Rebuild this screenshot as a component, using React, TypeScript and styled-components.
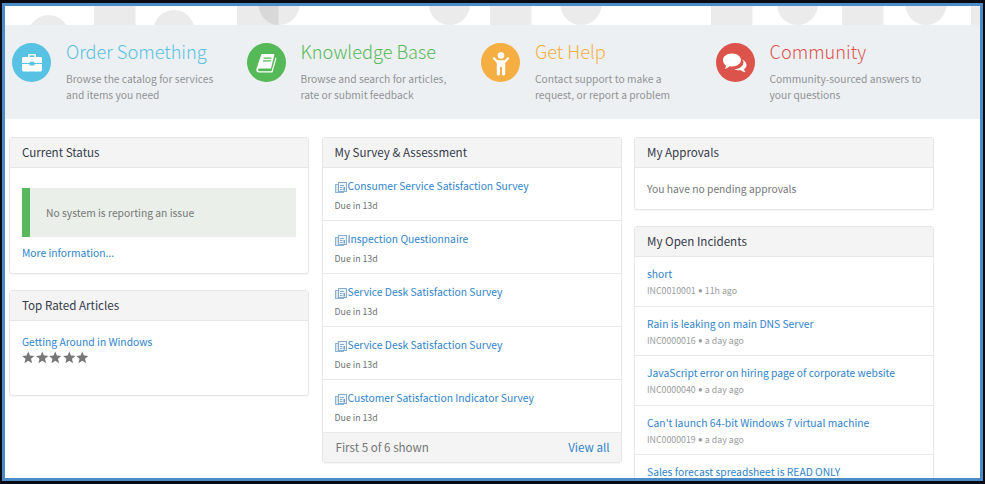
import React from "react";
import styled, { createGlobalStyle } from "styled-components";

const Global = createGlobalStyle`
  html, body { margin: 0; padding: 0; background: #000; }
  * { box-sizing: border-box; }
`;

const font = `"Noto Sans CJK SC", "Lato", "Liberation Sans", sans-serif`;

const Frame = styled.div`
  width: 985px;
  height: 484px;
  background: #0a0a12;
  padding: 3px 2px 3px 2px;
`;
const Page = styled.div`
  width: 981px;
  height: 478px;
  background: #fff;
  border: 3px solid #4a8bc8;
  overflow: hidden;
  font-family: ${font};
`;
const Pattern = styled.svg`
  display: block;
  width: 975px;
  height: 19px;
`;
const Hero = styled.div`
  height: 94px;
  background: #edf0f2;
  display: grid;
  grid-template-columns: repeat(4, 234.5px);
  padding-left: 7px;
  align-items: start;
`;
const HeroItem = styled.div`
  display: flex;
  gap: 15px;
  padding-top: 18px;
`;
const Circle = styled.div<{ $c: string }>`
  width: 39px;
  height: 39px;
  border-radius: 50%;
  background: ${p => p.$c};
  display: flex;
  align-items: center;
  justify-content: center;
  flex: none;
`;
const HeroText = styled.div`
  margin-top: -6px;
`;
const HeroTitle = styled.div<{ $c: string }>`
  color: ${p => p.$c};
  font-family: "Noto Sans CJK SC Light", "Noto Sans CJK SC", sans-serif;
  font-size: 18.2px;
  font-weight: 300;
  line-height: 28px;
  margin-bottom: 6px;
  white-space: nowrap;
`;
const HeroDesc = styled.div`
  color: #909396;
  font-size: 10.25px;
  line-height: 16px;
  white-space: nowrap;
`;
const Columns = styled.div`
  display: grid;
  grid-template-columns: repeat(3, 300px);
  column-gap: 12.5px;
  padding: 18px 0 0 4px;
  align-items: start;
`;
const Column = styled.div`
  display: flex;
  flex-direction: column;
  gap: 16px;
`;
const Card = styled.div`
  background: #fff;
  border: 1px solid #e4e8ea;
  border-radius: 3px;
  box-shadow: 0 1px 1px rgba(0, 0, 0, 0.04);
  overflow: hidden;
`;
const CardHead = styled.div`
  height: 30px;
  background: #f4f4f4;
  border-bottom: 1px solid #e4e6e7;
  padding: 0 0 2px 12px;
  display: flex;
  align-items: center;
  font-size: 11.6px;
  color: #343a4a;
`;
const StatusBody = styled.div`
  padding: 20px 12px 13px;
  height: 105px;
`;
const StatusBox = styled.div`
  height: 49px;
  background: #ebefe9;
  border-left: 8px solid #58b95c;
  padding: 0 0 1px 16px;
  display: flex;
  align-items: center;
  font-size: 10.3px;
  color: #747878;
`;
const Link = styled.a`
  color: #2f84cc;
  font-size: 10.3px;
  line-height: 16px;
  display: block;
  white-space: nowrap;
`;
const MoreLink = styled(Link)`
  margin-top: 8px;
`;
const ArticlesBody = styled.div`
  height: 74px;
  padding: 13px 12px;
`;
const Stars = styled.div`
  display: flex;
  gap: 1px;
  margin-top: 1px;
`;
const Row = styled.div`
  height: 53px;
  border-bottom: 1px solid #e7e9ea;
  padding: 9px 12px 0;
`;
const RowTitle = styled.div`
  display: flex;
  align-items: center;
  gap: 1px;
  height: 17px;
`;
const Meta = styled.div`
  font-size: 8.8px;
  color: #6f7375;
  margin-top: 5px;
  line-height: 13px;
`;
const CardFoot = styled.div`
  height: 29px;
  background: #f4f4f4;
  padding: 0 11px 1px 13px;
  display: flex;
  align-items: center;
  justify-content: space-between;
  font-size: 11.6px;
  color: #747678;
`;
const FootLink = styled.span`
  color: #2f84cc;
`;
const Plain = styled.div`
  height: 41px;
  padding-left: 12px;
  display: flex;
  align-items: center;
  font-size: 10.3px;
  color: #747878;
`;
const IncidentRow = styled.div`
  height: 49.5px;
  border-bottom: 1px solid #e7e9ea;
  padding: 9px 12px 0;
`;
const IncMeta = styled(Meta)`
  color: #989b9d;
  margin-top: 1px;
  line-height: 16px;
`;
const Dot = styled.span`
  font-family: "Lato", sans-serif;
`;
const SurveySvg = styled.svg`
  flex: none;
  margin-top: 3px;
`;

const Briefcase = () => (
  <svg width="24" height="22" viewBox="0 0 24 22">
    <path fill="#fff" d="M8 5V3.2C8 2.5 8.5 2 9.2 2h5.600C15.500 2 16 2.500 16 3.200V5h-1.500V3.500h-5V5z" />
    <path fill="#fff" d="M3.500 5h17C21.400 5 22 5.600 22 6.500V11h-7.500V9.800h-5V11H2V6.500C2 5.600 2.600 5 3.500 5z" />
    <path fill="#fff" d="M2 12h7.500v1.500h5V12H22v6c0 .9-.6 1.500-1.500 1.500h-17C2.600 19.500 2 18.900 2 18z" />
  </svg>
);
const Book = () => (
  <svg width="24" height="24" viewBox="0 0 24 24">
    <path fill="#fff" d="M7.500 3H20.500L17 17.500H5.500C4.500 17.500 4 18.200 4 19s.6 1.300 1.500 1.300H17.500L21.500 6.500 22.500 7 18.500 21.500H5C3 21.500 2 20 2.400 18z" />
    <path fill="#4fb856" d="M9.800 6.500H17.500L17.200 7.800H9.500zM9.200 9.300H16.900L16.600 10.600H8.900z" />
  </svg>
);
const Child = () => (
  <svg width="24" height="26" viewBox="0 0 24 26">
    <circle cx="12" cy="5.500" r="3.300" fill="#fff" />
    <path fill="#fff" d="M3.500 8.200 5 7l3.500 3.200H15.500L19 7l1.500 1.200-4.300 4.800V24a1.500 1.500 0 0 1-3.200 0v-7h-2v7a1.500 1.500 0 0 1-3.200 0V13z" />
  </svg>
);
const Comments = () => (
  <svg width="26" height="24" viewBox="0 0 26 24">
    <path fill="#fff" d="M19.500 8.500c2.800.8 5 2.800 5 5.500 0 1.900-1.100 3.300-2.500 4.300.2 1.100.8 2.100 1.500 3-1.900-.2-3.400-1.100-4.600-2.100-2.500.4-5-.2-6.900-1.300 5 .3 9.500-2.500 9.500-7 0-.8-.7-1.700-2-2.400z" />
    <path fill="#fff" d="M10 2.500c5 0 9 2.900 9 6.500s-4 6.500-9 6.500c-.9 0-1.700-.1-2.500-.2C6.200 16.600 4.500 17.500 2.500 18c.8-1 1.500-2.100 1.700-3.300C2.300 13.500 1 11.400 1 9c0-3.600 4-6.500 9-6.500z" />
  </svg>
);
const SurveyIcon = () => (
  <SurveySvg width="12" height="12" viewBox="0 0 12 12">
    <rect x="0.500" y="3.500" width="8" height="8" fill="#d7e5f1" stroke="#8fb3d3" />
    <rect x="3.500" y="1.500" width="8" height="9" fill="#eef4f9" stroke="#86add0" />
    <path d="M5 4.500h4M5 6.500h2.500M5 8.500h2.500" stroke="#86add0" />
    <rect x="8.500" y="6" width="1.500" height="3.500" fill="#6f9fc8" />
  </SurveySvg>
);
const Star = () => (
  <svg width="12.500" height="12.500" viewBox="0 0 24 24">
    <path fill="#777" d="M12 .8l3.200 7.900 8.600.7-6.500 5.600 2 8.400L12 18.900l-7.300 4.500 2-8.400L.2 9.400l8.600-.7z" />
  </svg>
);

const heroItems = [
  { c: "#57c2e3", t: "Order Something", d: ["Browse the catalog for services", "and items you need"], i: <Briefcase /> },
  { c: "#55b958", t: "Knowledge Base", d: ["Browse and search for articles,", "rate or submit feedback"], i: <Book /> },
  { c: "#f4ae42", t: "Get Help", d: ["Contact support to make a", "request, or report a problem"], i: <Child /> },
  { c: "#dc534c", t: "Community", d: ["Community-sourced answers to", "your questions"], i: <Comments /> },
];
const surveys = [
  "Consumer Service Satisfaction Survey",
  "Inspection Questionnaire",
  "Service Desk Satisfaction Survey",
  "Service Desk Satisfaction Survey",
  "Customer Satisfaction Indicator Survey",
];
const incidents = [
  { t: "short", n: "INC0010001", a: "11h ago" },
  { t: "Rain is leaking on main DNS Server", n: "INC0000016", a: "a day ago" },
  { t: "JavaScript error on hiring page of corporate website", n: "INC0000040", a: "a day ago" },
  { t: "Can't launch 64-bit Windows 7 virtual machine", n: "INC0000019", a: "a day ago" },
  { t: "Sales forecast spreadsheet is READ ONLY" },
];
const rects = [89, 232, 485, 706, 837, 966];
const circles: [number, number][] = [[43.500, 29.500], [169, 24.500], [274, -1.500], [444.500, -1.500], [576, -1.500], [792.500, -1.500], [921, -1.500]];

export default function App() {
  return (
    <Frame>
      <Global />
      <Page>
        <Pattern viewBox="0 0 975 19">
          {rects.map(x => <rect key={x} x={x} y="0" width="41.500" height="19" fill="#000" fillOpacity={0.08} />)}
          {circles.map(([x, y]) => <circle key={x} cx={x} cy={y} r="20.500" fill="#000" fillOpacity={0.08} />)}
        </Pattern>
        <Hero>
          {heroItems.map(h => (
            <HeroItem key={h.t}>
              <Circle $c={h.c}>{h.i}</Circle>
              <HeroText>
                <HeroTitle $c={h.c}>{h.t}</HeroTitle>
                <HeroDesc>{h.d[0]}<br />{h.d[1]}</HeroDesc>
              </HeroText>
            </HeroItem>
          ))}
        </Hero>
        <Columns>
          <Column>
            <Card>
              <CardHead>Current Status</CardHead>
              <StatusBody>
                <StatusBox>No system is reporting an issue</StatusBox>
                <MoreLink>More information...</MoreLink>
              </StatusBody>
            </Card>
            <Card>
              <CardHead>Top Rated Articles</CardHead>
              <ArticlesBody>
                <Link>Getting Around in Windows</Link>
                <Stars>{[0, 1, 2, 3, 4].map(i => <Star key={i} />)}</Stars>
              </ArticlesBody>
            </Card>
          </Column>
          <Column>
            <Card>
              <CardHead>My Survey &amp; Assessment</CardHead>
              {surveys.map((s, i) => (
                <Row key={i}>
                  <RowTitle><SurveyIcon /><Link>{s}</Link></RowTitle>
                  <Meta>Due in 13d</Meta>
                </Row>
              ))}
              <CardFoot>First 5 of 6 shown<FootLink>View all</FootLink></CardFoot>
            </Card>
          </Column>
          <Column>
            <Card>
              <CardHead>My Approvals</CardHead>
              <Plain>You have no pending approvals</Plain>
            </Card>
            <Card>
              <CardHead>My Open Incidents</CardHead>
              {incidents.map(({ t, n, a }) => (
                <IncidentRow key={t}>
                  <Link>{t}</Link>
                  {n && <IncMeta>{n} <Dot>•</Dot> {a}</IncMeta>}
                </IncidentRow>
              ))}
            </Card>
          </Column>
        </Columns>
      </Page>
    </Frame>
  );
}
